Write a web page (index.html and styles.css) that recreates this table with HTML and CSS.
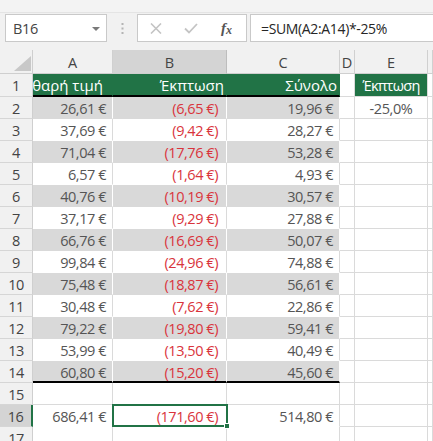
FILE: index.html
```html
<!DOCTYPE html>
<html lang="el">
<head>
<meta charset="utf-8">
<title>Excel</title>
<link rel="stylesheet" href="styles.css">
</head>
<body>
<div class="app">
  <div class="topstrip"></div>
  <div class="toolbar">
    <div class="namebox">
      <span class="namebox-text">B16</span>
      <svg class="dropdown" width="8" height="4" viewBox="0 0 8 4"><polygon points="0,0 8,0 4,4" fill="#7a7a7a"/></svg>
    </div>
    <div class="grip">
      <svg width="3" height="11" viewBox="0 0 3 11"><rect x="0.5" y="0" width="2" height="2" fill="#b4b4b4"/><rect x="0.5" y="4.5" width="2" height="2" fill="#b4b4b4"/><rect x="0.5" y="9" width="2" height="2" fill="#b4b4b4"/></svg>
    </div>
    <div class="fxbox">
      <svg class="btn-cancel" width="12" height="11" viewBox="0 0 12 11"><path d="M1 0.5 L11 10.5 M11 0.5 L1 10.5" stroke="#c4c4c4" stroke-width="1.6" fill="none"/></svg>
      <svg class="btn-enter" width="14" height="11" viewBox="0 0 14 11"><path d="M1 5.5 L5 9.5 L13 1" stroke="#c4c4c4" stroke-width="1.8" fill="none"/></svg>
      <span class="fx">f<span class="fx-x">x</span></span>
    </div>
    <div class="formula">=SUM(A2:A14)*-25%</div>
  </div>

  <div class="sheet">
    <!-- column headers -->
    <div class="corner"><svg width="17" height="15" viewBox="0 0 17 15"><polygon points="17,0 17,15 0,15" fill="#c8c8c8"/></svg></div>
    <div class="colh">A</div>
    <div class="colh sel">B</div>
    <div class="colh">C</div>
    <div class="colh">D</div>
    <div class="colh">E</div>
    <div class="colh"></div>

    <!-- row 1 -->
    <div class="rh">1</div>
    <div class="c hd hd-a thick"><span>Καθαρή τιμή</span></div>
    <div class="c hd hd-b thick"><span>Έκπτωση</span></div>
    <div class="c hd hd-c thick"><span>Σύνολο</span></div>
    <div class="c"></div>
    <div class="c hd hd-e"><span>Έκπτωση</span></div>
    <div class="c"></div>

    <!-- row 2 -->
    <div class="rh">2</div>
    <div class="c t band na">26,61 €</div>
    <div class="c t band nb">(6,65 €)</div>
    <div class="c t band nc">19,96 €</div>
    <div class="c"></div>
    <div class="c pct">-25,0%</div>
    <div class="c"></div>

    <div class="rh">3</div>
    <div class="c t na">37,69 €</div>
    <div class="c t nb">(9,42 €)</div>
    <div class="c t nc">28,27 €</div>
    <div class="c"></div><div class="c"></div><div class="c"></div>

    <div class="rh">4</div>
    <div class="c t band na">71,04 €</div>
    <div class="c t band nb">(17,76 €)</div>
    <div class="c t band nc">53,28 €</div>
    <div class="c"></div><div class="c"></div><div class="c"></div>

    <div class="rh">5</div>
    <div class="c t na">6,57 €</div>
    <div class="c t nb">(1,64 €)</div>
    <div class="c t nc">4,93 €</div>
    <div class="c"></div><div class="c"></div><div class="c"></div>

    <div class="rh">6</div>
    <div class="c t band na">40,76 €</div>
    <div class="c t band nb">(10,19 €)</div>
    <div class="c t band nc">30,57 €</div>
    <div class="c"></div><div class="c"></div><div class="c"></div>

    <div class="rh">7</div>
    <div class="c t na">37,17 €</div>
    <div class="c t nb">(9,29 €)</div>
    <div class="c t nc">27,88 €</div>
    <div class="c"></div><div class="c"></div><div class="c"></div>

    <div class="rh">8</div>
    <div class="c t band na">66,76 €</div>
    <div class="c t band nb">(16,69 €)</div>
    <div class="c t band nc">50,07 €</div>
    <div class="c"></div><div class="c"></div><div class="c"></div>

    <div class="rh">9</div>
    <div class="c t na">99,84 €</div>
    <div class="c t nb">(24,96 €)</div>
    <div class="c t nc">74,88 €</div>
    <div class="c"></div><div class="c"></div><div class="c"></div>

    <div class="rh">10</div>
    <div class="c t band na">75,48 €</div>
    <div class="c t band nb">(18,87 €)</div>
    <div class="c t band nc">56,61 €</div>
    <div class="c"></div><div class="c"></div><div class="c"></div>

    <div class="rh">11</div>
    <div class="c t na">30,48 €</div>
    <div class="c t nb">(7,62 €)</div>
    <div class="c t nc">22,86 €</div>
    <div class="c"></div><div class="c"></div><div class="c"></div>

    <div class="rh">12</div>
    <div class="c t band na">79,22 €</div>
    <div class="c t band nb">(19,80 €)</div>
    <div class="c t band nc">59,41 €</div>
    <div class="c"></div><div class="c"></div><div class="c"></div>

    <div class="rh">13</div>
    <div class="c t na">53,99 €</div>
    <div class="c t nb">(13,50 €)</div>
    <div class="c t nc">40,49 €</div>
    <div class="c"></div><div class="c"></div><div class="c"></div>

    <div class="rh">14</div>
    <div class="c t band na thick">60,80 €</div>
    <div class="c t band nb thick">(15,20 €)</div>
    <div class="c t band nc thick">45,60 €</div>
    <div class="c"></div><div class="c"></div><div class="c"></div>

    <div class="rh">15</div>
    <div class="c"></div><div class="c"></div><div class="c"></div>
    <div class="c"></div><div class="c"></div><div class="c"></div>

    <div class="rh rh-sel">16</div>
    <div class="c t na">686,41 €</div>
    <div class="c t nb active">(171,60 €)<span class="selection"><span class="handle"></span></span></div>
    <div class="c t nc">514,80 €</div>
    <div class="c"></div><div class="c"></div><div class="c"></div>

    <div class="rh">17</div>
    <div class="c"></div><div class="c"></div><div class="c"></div>
    <div class="c"></div><div class="c"></div><div class="c"></div>
  </div>
</div>
</body>
</html>
```

FILE: styles.css
```css
* { box-sizing: border-box; }

html, body {
  margin: 0;
  padding: 0;
  width: 433px;
  height: 441px;
  overflow: hidden;
  background: #ffffff;
  font-family: "Open Sans", "Noto Sans", sans-serif;
}

.app {
  width: 433px;
  height: 441px;
  overflow: hidden;
}

.topstrip {
  height: 13px;
  background: #f3f3f3;
  border-bottom: 1px solid #e4e4e4;
}

.toolbar {
  display: flex;
  align-items: flex-start;
  height: 37px;
  padding: 1px 0 0 5px;
  background: #f1f1f1;
}

.namebox {
  width: 102px;
  height: 28px;
  background: #fff;
  border: 1px solid #c9c9c9;
  display: flex;
  align-items: center;
  justify-content: space-between;
  padding: 0 6px 0 7px;
}

.namebox-text {
  font-size: 14.5px;
  color: #444;
  letter-spacing: -0.3px;
}

.dropdown { margin-top: 1px; }

.grip {
  width: 30px;
  height: 28px;
  display: flex;
  align-items: center;
  justify-content: center;
}

.fxbox {
  width: 110px;
  height: 28px;
  background: #fff;
  border: 1px solid #c9c9c9;
  display: flex;
  align-items: center;
  padding-left: 12px;
}

.btn-cancel { margin-right: 22px; }
.btn-enter { margin-right: 23px; }

.fx {
  font-family: "Liberation Serif", "DejaVu Serif", serif;
  font-style: italic;
  font-weight: bold;
  font-size: 15px;
  color: #555;
  line-height: 1;
}

.fx-x {
  font-size: 12px;
  position: relative;
  top: 1px;
}

.formula {
  flex: 1;
  margin-left: 3px;
  height: 28px;
  background: #fff;
  border: 1px solid #c9c9c9;
  border-right: none;
  display: flex;
  align-items: center;
  padding-left: 10px;
  font-size: 14px;
  letter-spacing: -0.35px;
  color: #262626;
  white-space: nowrap;
}

/* ---------- sheet ---------- */
.sheet {
  display: grid;
  grid-template-columns: 33px 80px 114px 113px 15px 73px 1fr;
  grid-template-rows: 24px 23px repeat(15, 22px) 22px;
  font-size: 14.5px;
}

.corner {
  background: #f1f1f1;
  border-right: 1px solid #cfcfcf;
  border-bottom: 1px solid #cfcfcf;
  display: flex;
  align-items: flex-end;
  justify-content: flex-end;
  padding: 0 1px 2px 0;
}

.colh {
  background: #f1f1f1;
  border-right: 1px solid #d0d0d0;
  border-bottom: 1px solid #cfcfcf;
  display: flex;
  align-items: center;
  justify-content: center;
  color: #444;
  font-size: 14.5px;
  padding-top: 1px;
}

.colh.sel {
  background: #d4d4d4;
  border-right-color: #bdbdbd;
}

.rh {
  background: #f1f1f1;
  border-right: 1px solid #cfcfcf;
  border-bottom: 1px solid #d6d6d6;
  display: flex;
  align-items: center;
  justify-content: center;
  color: #444;
  font-size: 14.5px;
  letter-spacing: -0.5px;
  padding-top: 1px;
}

.rh-sel {
  background: #d4d4d4;
  border-right: 2px solid #217346;
}

.c {
  border-right: 1px solid #dadada;
  border-bottom: 1px solid #dadada;
  background: #fff;
  display: flex;
  align-items: center;
  white-space: nowrap;
  overflow: hidden;
}

/* table region (A2:C14) has no horizontal gridlines */
.t {
  border-bottom-color: transparent;
  justify-content: flex-end;
  letter-spacing: -0.45px;
  padding-top: 2px;
  color: #555555;
}

.band {
  background: #d9d9d9;
  border-right-color: #ffffff;
}

.na { padding-right: 6px; }
.nb { padding-right: 8px; color: #d9343c; }
.nc { padding-right: 6px; }

.hd {
  background: #217346;
  color: #ffffff;
  font-size: 15px;
  justify-content: flex-end;
  border-right-color: #217346;
  border-bottom-color: #217346;
  padding-top: 1px;
}

.hd-a { padding-right: 9px; }
.hd-b { padding-right: 2px; }
.hd-c { padding-right: 2px; }
.hd-e {
  padding-right: 0;
  justify-content: center;
  border-right-color: #dadada;
  border-bottom-color: #dadada;
  font-size: 14.5px;
  letter-spacing: -0.7px;
}

.thick {
  border-bottom: 2px solid #000000;
}

.pct {
  justify-content: center;
  color: #555555;
  letter-spacing: -0.4px;
  padding-top: 2px;
}

.active {
  position: relative;
  overflow: visible;
  border-bottom-color: #dadada;
}

.selection {
  position: absolute;
  left: -1px;
  top: -1px;
  right: -2px;
  bottom: -1px;
  border: 2px solid #217346;
  pointer-events: none;
}

.handle {
  position: absolute;
  right: -4px;
  bottom: -4px;
  width: 6px;
  height: 6px;
  background: #217346;
  border: 1px solid #ffffff;
}
```
